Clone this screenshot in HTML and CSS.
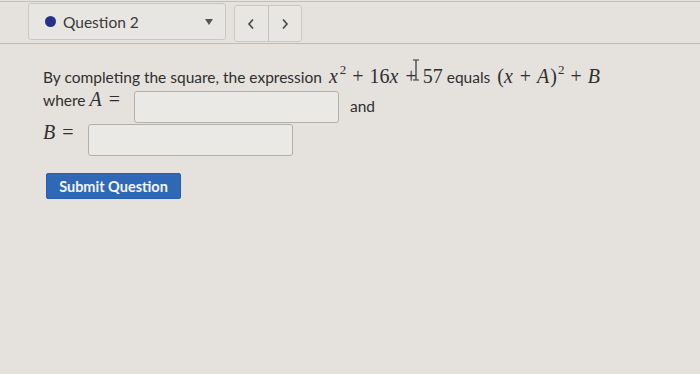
FILE: index.html
```html
<!DOCTYPE html>
<html>
<head>
<meta charset="utf-8">
<link rel="stylesheet" href="styles.css">
</head>
<body>
<div class="topbar">
  <div class="dropdown">
    <span class="dot"></span>
    <span class="qlabel">Question 2</span>
    <svg class="caret" width="8" height="6" viewBox="0 0 8 6"><path d="M0 0 L8 0 L4 6 Z" fill="#555"/></svg>
  </div>
  <div class="nav">
    <div class="navbtn"><svg width="8" height="12" viewBox="0 0 8 12"><path d="M6 1.5 L2 6 L6 10.5" fill="none" stroke="#444" stroke-width="1.6"/></svg></div>
    <div class="navbtn"><svg width="8" height="12" viewBox="0 0 8 12"><path d="M2 1.5 L6 6 L2 10.5" fill="none" stroke="#444" stroke-width="1.6"/></svg></div>
  </div>
</div>
<div class="content">
  <p class="line1">By completing the square, the expression <span class="m"><i>x</i><sup>2</sup><span class="op">+</span>16<i>x</i><span class="op curwrap">+<svg class="ibeam" width="8" height="22" viewBox="0 0 8 22"><path d="M1 1 H7 M4 1 V21 M1 21 H7" fill="none" stroke="#333" stroke-width="1.2"/></svg></span>57</span> equals <span class="m">(<i>x</i><span class="op">+</span><i>A</i>)<sup>2</sup><span class="op">+</span><i>B</i></span></p>
  <div class="row2">
    <span class="lbl">where <span class="m"><i>A</i><span class="rel">=</span></span></span>
    <div class="box boxa"></div>
    <span class="and">and</span>
  </div>
  <div class="row3">
    <span class="lbl"><span class="m"><i>B</i><span class="rel">=</span></span></span>
    <div class="box boxb"></div>
  </div>
  <button class="submit">Submit Question</button>
</div>
</body>
</html>
```
FILE: styles.css
```css
html, body {
  margin: 0;
  padding: 0;
}
body {
  background: #e5e2dd;
  width: 700px;
  height: 374px;
  overflow: hidden;
  font-family: Lato, "Open Sans", sans-serif;
  color: #2f2f2f;
}
.topbar {
  margin-top: 1px;
  border-top: 1px solid #c2bfba;
  border-bottom: 1px solid #bebbb6;
  height: 43px;
  box-sizing: border-box;
  padding: 1px 0 0 28px;
  display: flex;
  gap: 8px;
}
.dropdown {
  width: 198px;
  height: 37px;
  box-sizing: border-box;
  border: 1px solid #cbc8c3;
  border-radius: 3px;
  background: #e8e6e2;
  display: flex;
  align-items: center;
  padding-left: 16px;
  padding-right: 12px;
}
.dot {
  width: 11px;
  height: 11px;
  border-radius: 50%;
  background: #27318a;
}
.qlabel {
  margin-left: 7px;
  font-size: 15.5px;
  color: #3a3a3a;
  flex: 1;
}
.caret {
  display: block;
}
.nav {
  margin-top: 2px;
  width: 68px;
  height: 37px;
  box-sizing: border-box;
  border: 1px solid #cbc8c3;
  border-radius: 3px;
  background: #e8e6e2;
  display: flex;
}
.navbtn {
  flex: 1;
  display: flex;
  align-items: center;
  justify-content: center;
}
.navbtn + .navbtn {
  border-left: 1px solid #c4c1bc;
}
.content {
  padding-left: 43px;
  padding-top: 19px;
}
.line1 {
  margin: 0;
  font-size: 15.5px;
  line-height: 26px;
  white-space: nowrap;
}
.m {
  font-family: "Liberation Serif", "DejaVu Serif", serif;
  font-size: 20px;
}
.line1 .m {
  margin-left: 3px;
}
.m i {
  padding-right: 1px;
}
.op {
  margin: 0 6px;
}
.rel {
  margin-left: 6px;
}
.m sup {
  font-size: 13px;
  vertical-align: 9px;
  line-height: 0;
  margin-left: 1px;
}
.curwrap {
  position: relative;
}
.ibeam {
  position: absolute;
  left: 7px;
  top: -6px;
}
.row2 {
  display: flex;
  align-items: flex-start;
  margin-top: 1px;
}
.row3 {
  display: flex;
  align-items: flex-start;
  margin-top: 1px;
}
.lbl {
  font-size: 15.5px;
  line-height: 22px;
  white-space: nowrap;
  margin-top: -3px;
}
.box {
  height: 32px;
  box-sizing: border-box;
  border: 1px solid #b3b0ab;
  border-radius: 3px;
  background: #ebe9e5;
}
.boxa {
  width: 205px;
  margin-left: 14px;
}
.boxb {
  width: 205px;
  margin-left: 14px;
}
.and {
  margin-left: 11px;
  margin-top: 4px;
  font-size: 15.5px;
  line-height: 22px;
}
.submit {
  margin-top: 17px;
  margin-left: 3px;
  width: 135px;
  height: 26px;
  border: 1px solid #2a5ea8;
  border-radius: 2px;
  background: #3068b8;
  color: #f4f6fa;
  font-family: Lato, "Open Sans", sans-serif;
  font-weight: bold;
  font-size: 14.5px;
  padding: 0;
}
```
